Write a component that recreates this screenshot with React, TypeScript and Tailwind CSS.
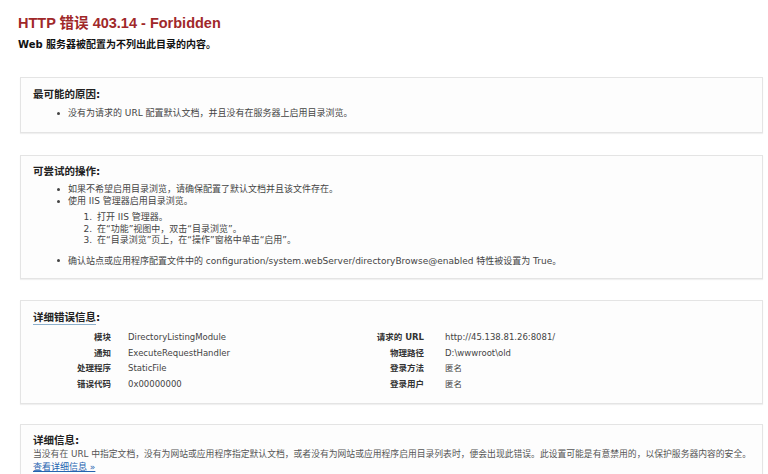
const latin = "font-['DejaVu_Sans','Noto_Sans_CJK_SC',sans-serif]";

function Box({ children, className = '' }: { children: React.ReactNode; className?: string }) {
  return (
    <div
      className={`ml-[2px] border border-[#e4e4e4] bg-[#fdfdfd] px-[12px] shadow-[0_1px_1px_rgba(0,0,0,0.06)] ${className}`}
    >
      {children}
    </div>
  );
}

function Heading({ children, underline = false }: { children: React.ReactNode; underline?: boolean }) {
  return (
    <h3 className="text-[10.5px] font-bold leading-[14px] text-[#222]">
      {underline ? <span className="border-b border-[#8db0cc] pb-[1px]">{children}</span> : children}
      <span>:</span>
    </h3>
  );
}

function Bullet({ children }: { children: React.ReactNode }) {
  return (
    <li className="flex items-center leading-[12px]">
      <span className="ml-[24px] mr-[8px] h-[3px] w-[3px] shrink-0 rounded-full bg-[#444]" />
      <span>{children}</span>
    </li>
  );
}

const steps = [
  '打开 IIS 管理器。',
  '在“功能”视图中，双击“目录浏览”。',
  '在“目录浏览”页上，在“操作”窗格中单击“启用”。',
];

const details: [string, string, string, string][] = [
  ['模块', 'DirectoryListingModule', '请求的 URL', 'http://45.138.81.26:8081/'],
  ['通知', 'ExecuteRequestHandler', '物理路径', 'D:\\wwwroot\\old'],
  ['处理程序', 'StaticFile', '登录方法', '匿名'],
  ['错误代码', '0x00000000', '登录用户', '匿名'],
];

export default function App() {
  return (
    <div className={`h-[474px] w-full overflow-hidden bg-white pl-[18px] pr-[5px] pt-[13px] ${latin}`}>
      <h1 className="font-['Liberation_Sans','Noto_Sans_CJK_SC',sans-serif] text-[14.5px] font-bold leading-[20px] text-[#a0282a]">
        HTTP 错误 403.14 - Forbidden
      </h1>
      <h2 className="mt-[5px] text-[10px] font-bold leading-[14px] text-[#111]">
        Web 服务器被配置为不列出此目录的内容。
      </h2>

      <Box className="mt-[25px] h-[56px] pt-[9px]">
        <Heading>最可能的原因</Heading>
        <ul className="mt-[6px] text-[9px] text-[#444]">
          <Bullet>没有为请求的 URL 配置默认文档，并且没有在服务器上启用目录浏览。</Bullet>
        </ul>
      </Box>

      <Box className="mt-[22px] h-[124px] pt-[8px]">
        <Heading>可尝试的操作</Heading>
        <ul className="mt-[5px] text-[9px] text-[#444]">
          <Bullet>如果不希望启用目录浏览，请确保配置了默认文档并且该文件存在。</Bullet>
          <Bullet>使用 IIS 管理器启用目录浏览。</Bullet>
        </ul>
        <ol className="mt-[5px] text-[9px] leading-[11.5px] text-[#444]">
          {steps.map((s, i) => (
            <li key={i} className="flex">
              <span className="ml-[46px] w-[13px] shrink-0 text-right">{i + 1}.</span>
              <span className="ml-[5px]">{s}</span>
            </li>
          ))}
        </ol>
        <ul className="mt-[8px] text-[9px] text-[#444]">
          <Bullet>
            确认站点或应用程序配置文件中的 configuration/system.webServer/directoryBrowse@enabled 特性被设置为 True。
          </Bullet>
        </ul>
      </Box>

      <Box className="mt-[21px] h-[104px] pt-[9px]">
        <Heading underline>详细错误信息</Heading>
        <div className="mt-[6px] grid grid-cols-[78px_243px_70px_1fr] text-[8.5px] leading-[15.6px] text-[#444]">
          {details.map(([l1, v1, l2, v2]) => (
            <div key={l1} className="contents">
              <span className="text-right font-bold text-[#333]">{l1}</span>
              <span className="pl-[17px]">{v1}</span>
              <span className="text-right font-bold text-[#333]">{l2}</span>
              <span className="pl-[21px]">{v2}</span>
            </div>
          ))}
        </div>
      </Box>

      <Box className="mt-[20px] h-[80px] pt-[8px]">
        <Heading>详细信息</Heading>
        <p className="mt-[1px] whitespace-nowrap text-[8.8px] leading-[13px] text-[#555]">
          当没有在 URL 中指定文档，没有为网站或应用程序指定默认文档，或者没有为网站或应用程序启用目录列表时，便会出现此错误。此设置可能是有意禁用的，以保护服务器内容的安全。
        </p>
        <a href="#" className="block w-fit text-[9px] leading-[13px] text-[#2563b0] underline">
          查看详细信息 »
        </a>
      </Box>
    </div>
  );
}
